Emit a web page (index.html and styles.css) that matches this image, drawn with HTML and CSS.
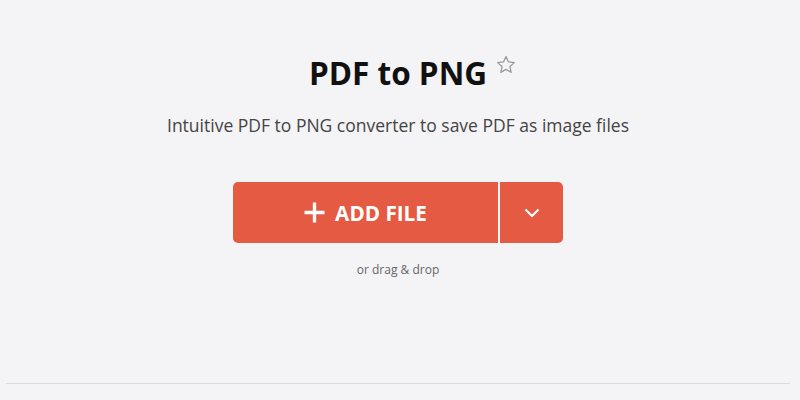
FILE: index.html
```html
<!DOCTYPE html>
<html>
<head>
<meta charset="utf-8">
<link rel="stylesheet" href="styles.css">
</head>
<body>
<main class="hero">
  <div class="title-row">
    <h1 class="title">PDF to PNG</h1>
    <svg class="star" viewBox="0 0 24 24" width="22" height="22"><path d="M12 2.8l2.7 5.9 6.4.7-4.8 4.3 1.3 6.3L12 16.8 6.4 20l1.3-6.3L2.9 9.4l6.4-.7z" fill="none" stroke="#9a9a9e" stroke-width="1.4" stroke-linejoin="round"/></svg>
  </div>
  <p class="subtitle">Intuitive PDF to PNG converter to save PDF as image files</p>
  <div class="upload">
    <button class="add-btn">
      <svg class="plus" viewBox="0 0 20 20" width="21" height="21"><path d="M10 0.5v19M0.5 10h19" stroke="#fff" stroke-width="3.2"/></svg>
      <span>ADD FILE</span>
    </button>
    <button class="drop-btn">
      <svg viewBox="0 0 16 10" width="16" height="10"><path d="M1.5 1.5l6.5 6.5 6.5-6.5" fill="none" stroke="#fff" stroke-width="2.2"/></svg>
    </button>
  </div>
  <p class="hint">or drag &amp; drop</p>
</main>
<hr class="divider">
</body>
</html>
```
FILE: styles.css
```css
html, body {
  margin: 0;
  padding: 0;
  background: #f4f3f6;
  font-family: "Open Sans", "Liberation Sans", sans-serif;
}
.hero {
  height: 383px;
  display: flex;
  flex-direction: column;
  align-items: center;
  box-sizing: border-box;
  padding-top: 49px;
  padding-right: 4px;
}
.title-row {
  position: relative;
  display: flex;
  justify-content: center;
}
.title {
  margin: 0;
  font-size: 31.5px;
  font-weight: 700;
  line-height: 48px;
  color: #111;
}
.star {
  position: absolute;
  left: calc(100% + 8px);
  top: 5px;
}
.subtitle {
  margin: 14px 0 0;
  font-size: 17.5px;
  line-height: 28px;
  color: #444;
}
.upload {
  display: flex;
  gap: 2px;
  margin-top: 43px;
}
.add-btn, .drop-btn {
  border: 0;
  background: #e45a42;
  color: #fff;
  height: 61px;
  display: flex;
  align-items: center;
  justify-content: center;
  cursor: pointer;
  font-family: inherit;
}
.add-btn {
  width: 265px;
  border-radius: 5px 0 0 5px;
  gap: 10px;
  font-size: 20.7px;
  font-weight: 700;
  padding: 0;
}
.drop-btn {
  width: 63px;
  border-radius: 0 5px 5px 0;
  padding: 0;
}
.hint {
  margin: 18px 0 0;
  font-size: 12px;
  line-height: 18px;
  color: #666;
}
.divider {
  margin: 0 10px 0 6px;
  border: 0;
  border-top: 1px solid #dcd9df;
  height: 0;
}
```
